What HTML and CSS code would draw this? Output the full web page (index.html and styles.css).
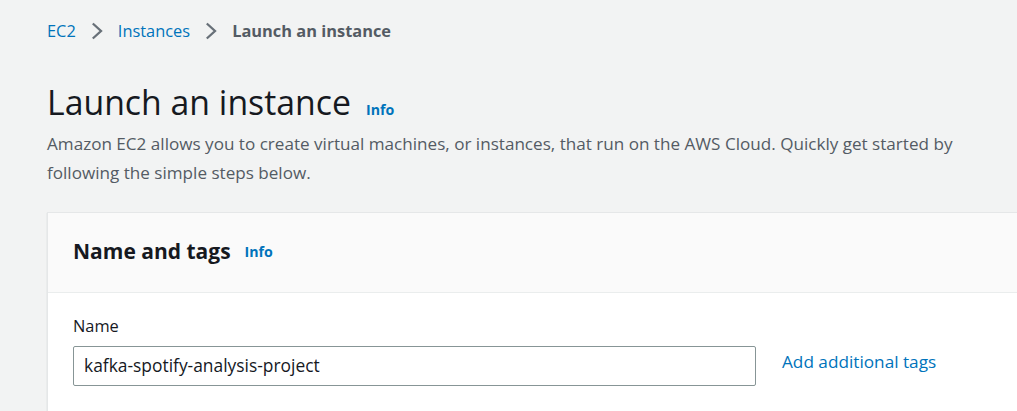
FILE: index.html
```html
<!DOCTYPE html>
<html>
<head>
<meta charset="utf-8">
<link rel="stylesheet" href="styles.css">
</head>
<body>
<div class="page">
  <nav class="crumbs">
    <a class="crumb-link">EC2</a>
    <svg class="chev" viewBox="0 0 12 18" width="12" height="18"><path d="M1.8 1.5L10 9l-8.2 7.5" fill="none" stroke="#687078" stroke-width="2.3"/></svg>
    <a class="crumb-link">Instances</a>
    <svg class="chev" viewBox="0 0 12 18" width="12" height="18"><path d="M1.8 1.5L10 9l-8.2 7.5" fill="none" stroke="#687078" stroke-width="2.3"/></svg>
    <span class="crumb-current">Launch an instance</span>
  </nav>
  <header class="head">
    <div class="title-row">
      <h1 class="title">Launch an instance</h1>
      <a class="info">Info</a>
    </div>
    <p class="desc">Amazon EC2 allows you to create virtual machines, or instances, that run on the AWS Cloud. Quickly get started by following the simple steps below.</p>
  </header>
  <section class="card">
    <div class="card-head">
      <h2 class="card-title">Name and tags</h2>
      <a class="info">Info</a>
    </div>
    <div class="card-body">
      <label class="label">Name</label>
      <div class="field-row">
        <div class="input">kafka-spotify-analysis-project</div>
        <a class="link">Add additional tags</a>
      </div>
    </div>
  </section>
</div>
</body>
</html>
```
FILE: styles.css
```css
* { box-sizing: border-box; }
html, body { margin: 0; padding: 0; }
body {
  background: #f2f3f3;
  font-family: "Open Sans", "Noto Sans", sans-serif;
  color: #16191f;
  width: 1017px;
  height: 411px;
  overflow: hidden;
}
.page { padding: 18px 0 0 47px; }
.crumbs {
  display: flex;
  align-items: center;
  gap: 15px;
  font-size: 16.4px;
  height: 24px;
}
.crumb-link { color: #0073bb; }
.crumb-current { color: #545b64; font-weight: 700; }
.chev { display: block; margin-top: 1px; }
.head { margin-top: 38px; }
.title-row { display: flex; align-items: baseline; gap: 15px; }
.title {
  margin: 0;
  font-size: 33.8px;
  font-weight: 400;
  line-height: 44px;
  color: #16191f;
}
.info { color: #0073bb; font-size: 14.2px; font-weight: 700; }
.desc {
  margin: 6px 0 0;
  font-size: 17.1px;
  line-height: 28.5px;
  color: #545b64;
  width: 930px;
}
.card {
  margin-top: 25px;
  background: #fff;
  border-top: 1px solid #e5e7e8;
  border-left: 1px solid #e5e7e8;
  box-shadow: 0 1px 1px rgba(0,28,36,.2);
}
.card-head {
  background: #fafafa;
  height: 80px;
  padding: 0 25px 3px;
  display: flex;
  align-items: center;
  gap: 14px;
  border-bottom: 1px solid #eaeded;
}
.card-title { margin: 0; font-size: 21px; font-weight: 700; color: #16191f; }
.card-body { padding: 22px 25px 30px; }
.label { display: block; font-size: 16.4px; color: #16191f; line-height: 22px; }
.field-row { display: flex; align-items: center; gap: 26px; margin-top: 9px; }
.input {
  width: 683px;
  height: 40px;
  border: 1px solid #879596;
  border-radius: 2px;
  padding: 0 10px 2px;
  display: flex;
  align-items: center;
  font-size: 17.4px;
  color: #16191f;
}
.link { color: #0073bb; font-size: 17.2px; margin-bottom: 10px; }
```
